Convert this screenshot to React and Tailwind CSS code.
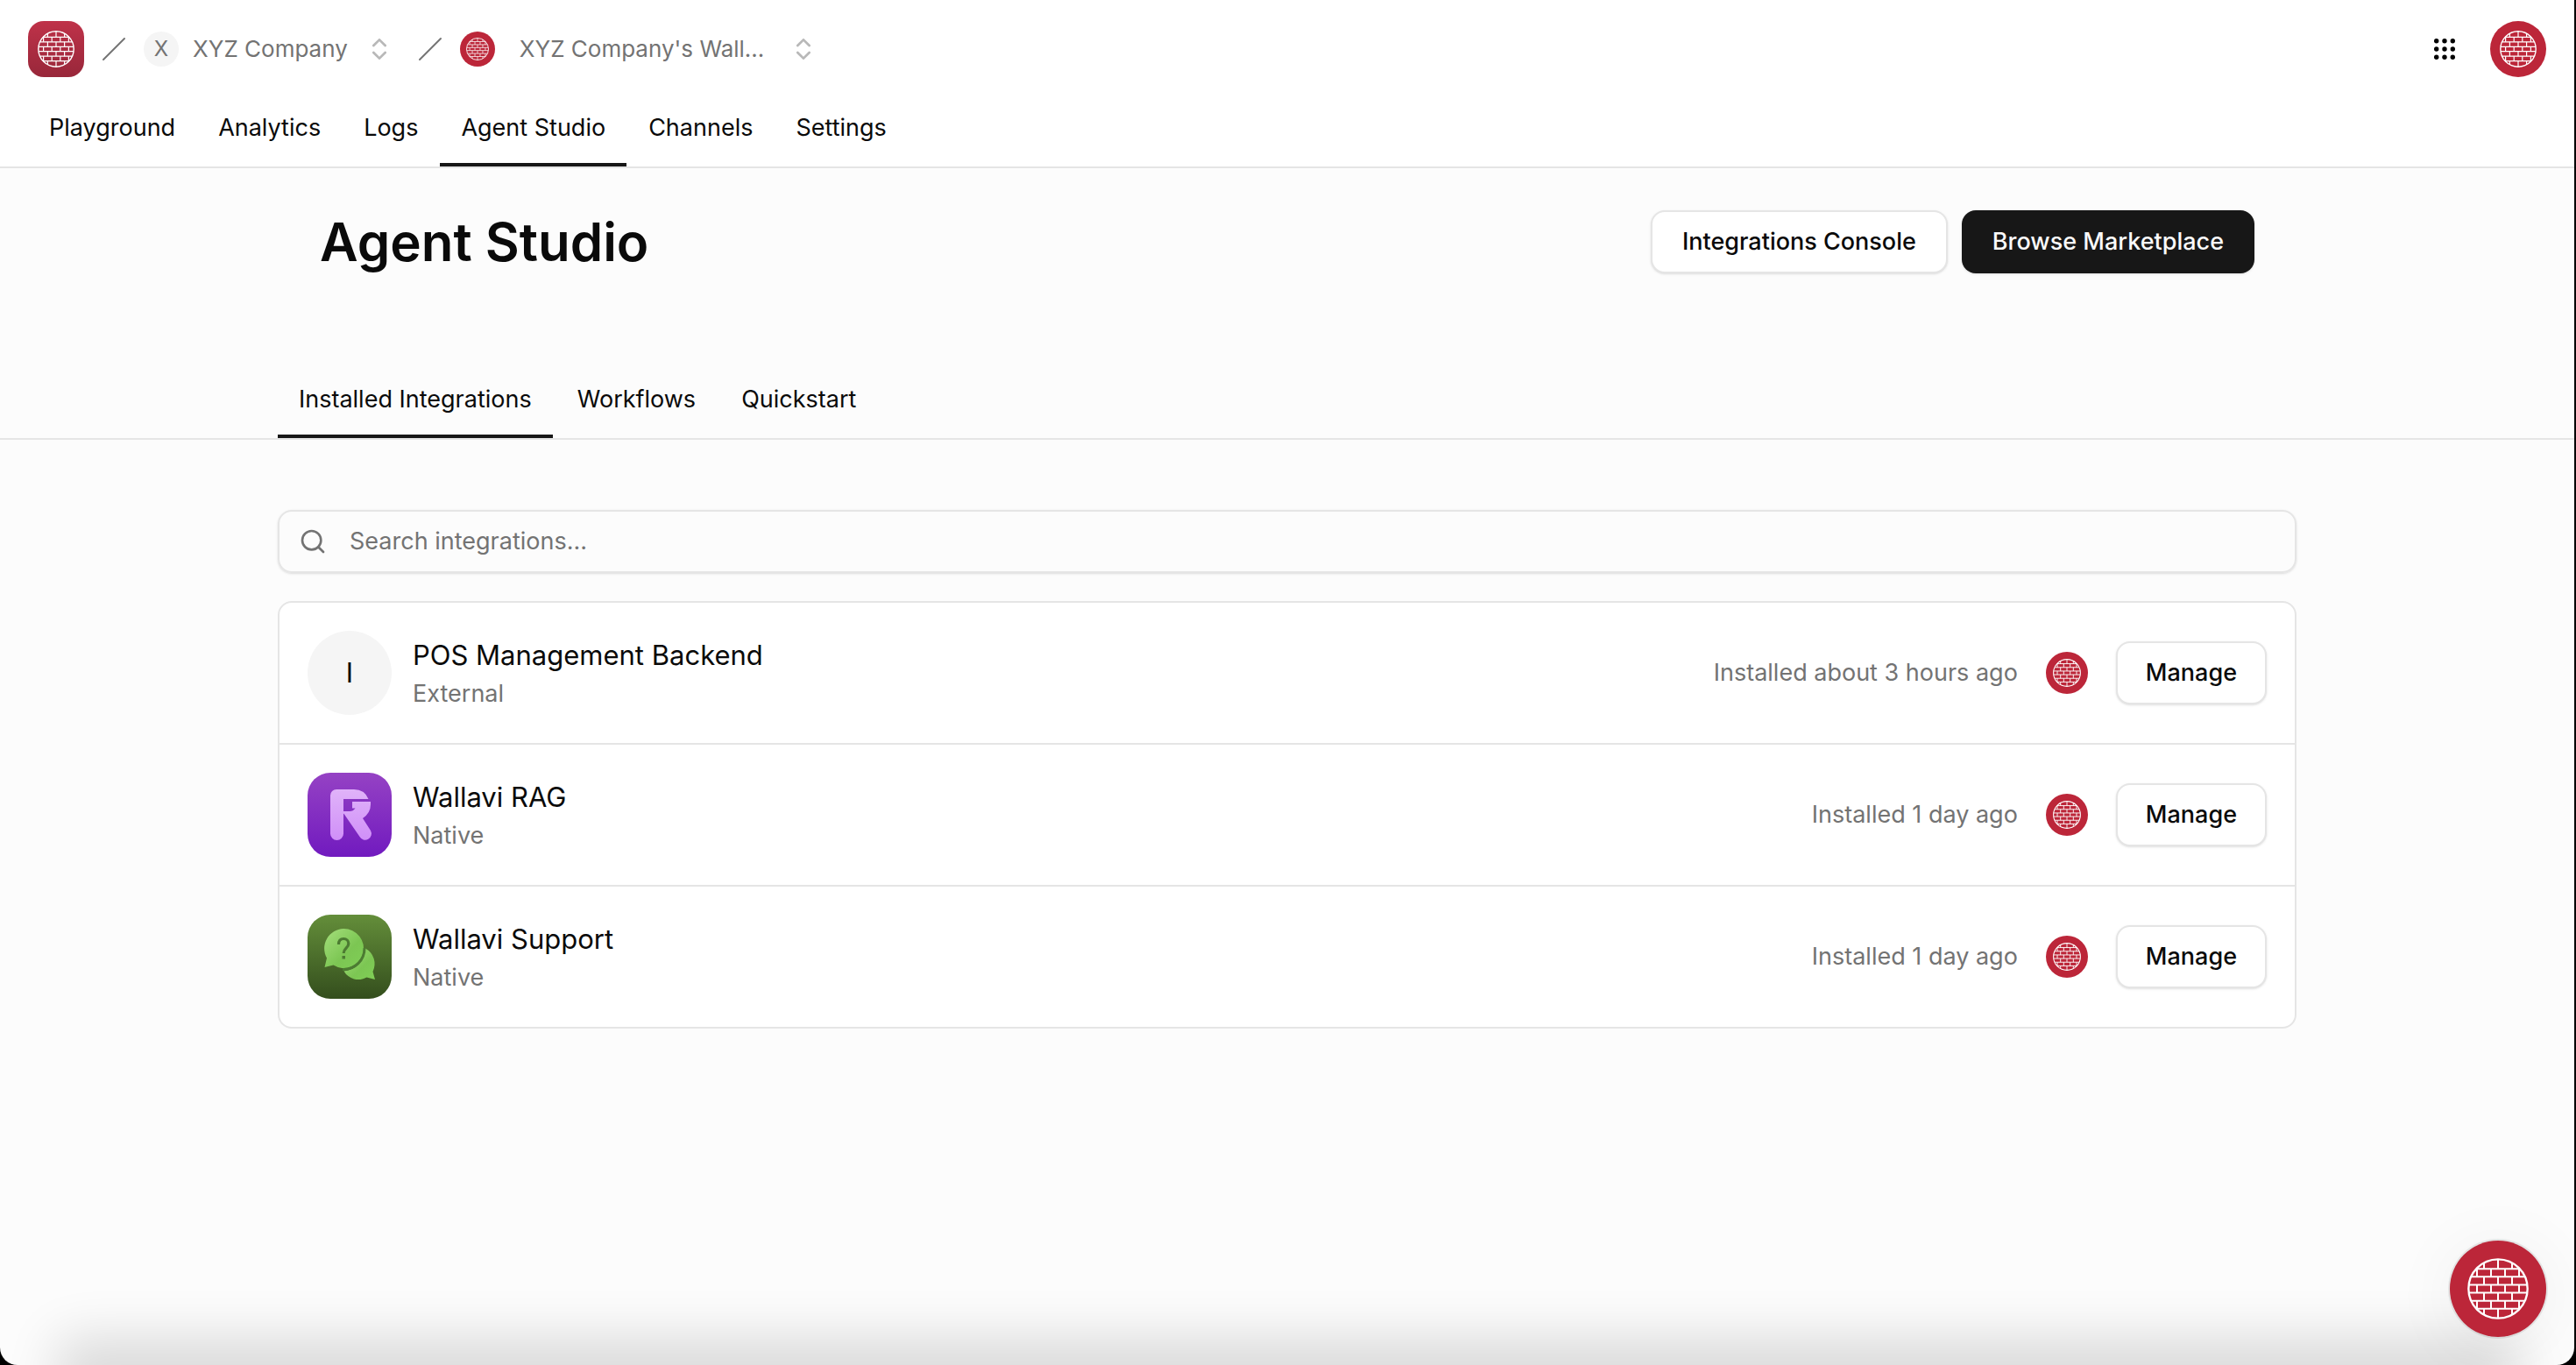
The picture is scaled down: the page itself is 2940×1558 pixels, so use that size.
import { ChevronsUpDown, Search } from 'lucide-react';

const tabs = ['Playground', 'Analytics', 'Logs', 'Agent Studio', 'Channels', 'Settings'];
const studioTabs = ['Installed Integrations', 'Workflows', 'Quickstart'];

const integrations = [
    { name: 'POS Management Backend', type: 'External', installed: 'Installed about 3 hours ago', icon: 'letter' },
    { name: 'Wallavi RAG', type: 'Native', installed: 'Installed 1 day ago', icon: 'rag' },
    { name: 'Wallavi Support', type: 'Native', installed: 'Installed 1 day ago', icon: 'support' },
];

// Round brick wall, drawn around the origin
const Bricks = ({ className }) => (
    <svg viewBox="-105 -105 210 210" className={className} fill="none" stroke="currentColor" strokeWidth="7" aria-hidden="true">
        <circle r="101" />
        <path strokeWidth="6" d="M-74-68.5H74M-92-41H92M-100-13.5H100M-100 13.5H100M-92 41H92M-74 68.5H74" />
        <path strokeWidth="6" d="M-48-88V-68.5M0-100V-68.5M48-88V-68.5M-72-68.5V-41M-24-68.5V-41M24-68.5V-41M72-68.5V-41M-48-41V-13.5M0-41V-13.5M48-41V-13.5M-72-13.5V13.5M-24-13.5V13.5M24-13.5V13.5M72-13.5V13.5M-48 13.5V41M0 13.5V41M48 13.5V41M-72 41V68.5M-24 41V68.5M24 41V68.5M72 41V68.5M-48 68.5V88M0 68.5V100M48 68.5V88" />
    </svg>
);

const Slash = () => (
    <svg viewBox="0 0 28 28" className="size-7 text-[#737373]" fill="none" stroke="currentColor" strokeWidth="2" strokeLinecap="round" aria-hidden="true">
        <path d="M2 26L26 2" />
    </svg>
);

const RagIcon = () => (
    <svg viewBox="0 0 96 96" className="size-24 shrink-0" aria-hidden="true">
        <defs>
            <linearGradient id="rag-bg" x1="0" y1="0" x2="0" y2="1">
                <stop offset="0" stopColor="#9542c4" />
                <stop offset="1" stopColor="#711abf" />
            </linearGradient>
            <linearGradient id="rag-fg" x1="0" y1="0" x2="0" y2="1">
                <stop offset="0" stopColor="#e0b3f9" />
                <stop offset="1" stopColor="#d08ff8" />
            </linearGradient>
        </defs>
        <rect width="96" height="96" rx="26" fill="url(#rag-bg)" />
        <path fill="url(#rag-fg)" d="M33 19H53Q65 19 69.5 30H41V44H48Q52 44 54.5 40.5H51V33H72V36Q72 46 63 52L72 66A7 7 0 0 1 59.5 73L42 47.5L41 46.5V69.5A7.5 7.5 0 0 1 26 69.5V26A7 7 0 0 1 33 19Z" />
    </svg>
);

const SupportIcon = () => (
    <svg viewBox="0 0 96 96" className="size-24 shrink-0" aria-hidden="true">
        <defs>
            <linearGradient id="support-bg" x1="0" y1="0" x2="0" y2="1">
                <stop offset="0" stopColor="#648e3a" />
                <stop offset="1" stopColor="#344e1d" />
            </linearGradient>
            <linearGradient id="support-fg" x1="0" y1="0" x2="1" y2="1">
                <stop offset="0" stopColor="#a5df7c" />
                <stop offset="0.6" stopColor="#7cc653" />
                <stop offset="1" stopColor="#80cf56" />
            </linearGradient>
        </defs>
        <rect width="96" height="96" rx="26" fill="url(#support-bg)" />
        <path fill="url(#support-fg)" d="M41 16A22.5 22.5 0 1 1 29.5 57.5L19.5 60L22 49.5A22.5 22.5 0 0 1 41 16Z" />
        <path fill="url(#support-fg)" d="M66 38.5A20 20 0 0 1 74.5 65L77 74L67.5 71.5A19 19 0 0 1 41.5 64.5Q62 62 66 38.5Z" />
        {/* gap between the two bubbles */}
        <path d="M40 62.5A24 24 0 0 0 65 38" fill="none" stroke="#4c7b32" strokeWidth="3" />
        <path d="M35.5 34C35.5 29.5 38 27.5 41.2 27.5C44.5 27.5 46.8 29.8 46.8 33C46.8 38 41.2 38.5 41.2 44" fill="none" stroke="#4c7b32" strokeWidth="3.2" />
        <rect x="39.5" y="47" width="3.5" height="3.5" fill="#4c7b32" />
    </svg>
);

const IntegrationIcon = ({ icon }) => {
    if (icon === 'rag') return <RagIcon />;
    if (icon === 'support') return <SupportIcon />;
    return <span className="flex size-24 shrink-0 items-center justify-center rounded-full bg-[#f5f5f5] text-[31px]">I</span>;
};

const Tab = ({ label, active }) => (
    <a href="#" className={`px-6 pb-[7px] border-b-4 ${active ? 'border-[#171717]' : 'border-transparent'}`}>
        {label}
    </a>
);

const App = () => {
    return (
        <div className="min-h-screen flex flex-col bg-black pr-[2px] font-['Inter',sans-serif] text-[27px] leading-10 text-[#0a0a0a]">
            <div className="relative flex-1 overflow-hidden rounded-b-[20px] bg-[#fcfcfc]">
                <header className="bg-white border-b-2 border-[#e5e5e5]">
                    <div className="flex items-center justify-between px-8 pt-6">
                        <div className="flex items-center text-[26px] text-[#737373]">
                            <a href="#" aria-label="Home" className="flex size-16 items-center justify-center rounded-[18px] bg-linear-to-b from-[#bf3249] to-[#98273a] text-white">
                                <Bricks className="size-[42px]" />
                            </a>
                            <div className="ml-5"><Slash /></div>
                            <button type="button" className="ml-5 flex items-center">
                                <span className="flex size-10 items-center justify-center rounded-full bg-[#f5f5f5] text-2xl">X</span>
                                <span className="ml-4">XYZ Company</span>
                                <ChevronsUpDown className="ml-5 size-8 opacity-50" strokeWidth={2} />
                            </button>
                            <div className="ml-7"><Slash /></div>
                            <button type="button" className="ml-5 flex items-center">
                                <span className="flex size-10 items-center justify-center rounded-full bg-[#bc2639] text-white">
                                    <Bricks className="size-[26px]" />
                                </span>
                                <span className="ml-7 min-w-[280px] text-left">XYZ Company's Wall...</span>
                                <ChevronsUpDown className="ml-7 size-8 opacity-50" strokeWidth={2} />
                            </button>
                        </div>
                        <div className="flex items-center gap-[34px]">
                            <button type="button" aria-label="Apps" className="p-1">
                                <svg viewBox="0 0 28 28" className="size-7" fill="#000" aria-hidden="true">
                                    {[4.7, 14, 23.3].map((y) => [4.7, 14, 23.3].map((x) => <circle key={`${x}-${y}`} cx={x} cy={y} r="2.7" />))}
                                </svg>
                            </button>
                            <button type="button" aria-label="Account" className="flex size-16 items-center justify-center rounded-full bg-[#bc2639] text-white">
                                <Bricks className="size-[42px]" />
                            </button>
                        </div>
                    </div>
                    <nav className="flex gap-px px-8 pt-[25px] leading-[66px]">
                        {tabs.map((tab) => <Tab key={tab} label={tab} active={tab === 'Agent Studio'} />)}
                    </nav>
                </header>

                <main>
                    <div className="border-b-2 border-[#e5e5e5]">
                        <div className="mx-auto max-w-[2304px]">
                            <div className="flex items-center justify-between px-12 pt-12">
                                <h1 className="text-6xl font-semibold">Agent Studio</h1>
                                <div className="flex gap-4 font-medium">
                                    <button type="button" className="h-[72px] rounded-2xl border-2 border-[#e5e5e5] bg-white px-[34px] shadow-sm">Integrations Console</button>
                                    <button type="button" className="h-[72px] rounded-2xl bg-[#171717] px-[35px] text-[#fafafa] shadow-sm">Browse Marketplace</button>
                                </div>
                            </div>
                            <nav className="flex gap-1 pt-[111px] leading-[66px]">
                                {studioTabs.map((tab) => <Tab key={tab} label={tab} active={tab === 'Installed Integrations'} />)}
                            </nav>
                        </div>
                    </div>

                    <div className="mx-auto max-w-[2304px] pt-20">
                        <label className="flex h-[72px] items-center gap-[26px] rounded-2xl border-2 border-[#e5e5e5] px-[22px] shadow-sm">
                            <Search className="size-8 text-[#737373]" strokeWidth={2} />
                            <input type="text" aria-label="Search integrations" placeholder="Search integrations..." className="flex-1 bg-transparent outline-none placeholder-[#737373]" />
                        </label>

                        <ul className="mt-8 divide-y-2 divide-[#e5e5e5] rounded-2xl border-2 border-[#e5e5e5] bg-white">
                            {integrations.map((item) => (
                                <li key={item.name} className="flex items-center gap-8 p-8">
                                    <div className="flex flex-1 items-center gap-6">
                                        <IntegrationIcon icon={item.icon} />
                                        <div>
                                            <h2 className="text-[31px] leading-12">{item.name}</h2>
                                            <p className="text-[#737373]">{item.type}</p>
                                        </div>
                                    </div>
                                    <span className="text-[#737373]">{item.installed}</span>
                                    <span className="flex size-12 items-center justify-center rounded-full bg-[#bc2639] text-white">
                                        <Bricks className="size-8" />
                                    </span>
                                    <button type="button" className="h-[72px] rounded-2xl border-2 border-[#e5e5e5] bg-white px-8 font-medium shadow-sm">Manage</button>
                                </li>
                            ))}
                        </ul>
                    </div>
                </main>

                {/* soft shade along the bottom edge */}
                <div className="pointer-events-none absolute inset-x-24 -bottom-5 h-5 shadow-[0_0_60px_30px_rgba(0,0,0,0.14)]" />

                <button type="button" aria-label="Open chat" className="absolute right-8 bottom-8 flex size-[110px] items-center justify-center rounded-full bg-[#bc2639] text-white shadow-[0_0_0_2px_rgba(0,0,0,0.08),0_8px_80px_rgba(0,0,0,0.06)]">
                    <Bricks className="size-[70px]" />
                </button>
            </div>
        </div>
    );
};

export default App;
